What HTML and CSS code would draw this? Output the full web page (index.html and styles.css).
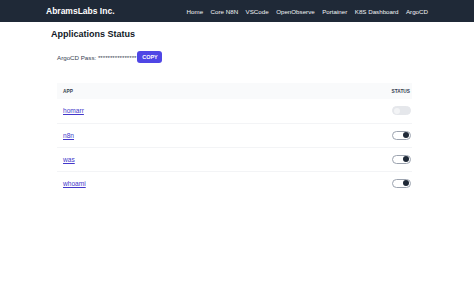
FILE: index.html
```html
<!DOCTYPE html>
<html>
<head>
<meta charset="utf-8">
<link rel="stylesheet" href="styles.css">
</head>
<body>
<nav class="nav">
  <div class="nav-inner">
    <span class="brand">AbramsLabs Inc.</span>
    <div class="links">
      <a>Home</a><a>Core N8N</a><a>VSCode</a><a>OpenObserve</a><a>Portainer</a><a>K8S Dashboard</a><a>ArgoCD</a>
    </div>
  </div>
</nav>
<main class="main">
  <h1 class="title">Applications Status</h1>
  <div class="pass">
    <span>ArgoCD Pass: ****************</span>
    <button class="copy">COPY</button>
  </div>
  <table class="tbl">
    <thead>
      <tr><th class="c-app">APP</th><th class="c-status">STATUS</th></tr>
    </thead>
    <tbody>
      <tr><td><a class="app">homarr</a></td><td class="c-status"><span class="tog off"><span class="knob"></span></span></td></tr>
      <tr><td><a class="app">n8n</a></td><td class="c-status"><span class="tog on"><span class="knob"></span></span></td></tr>
      <tr><td><a class="app">was</a></td><td class="c-status"><span class="tog on"><span class="knob"></span></span></td></tr>
      <tr><td><a class="app">whoami</a></td><td class="c-status"><span class="tog on"><span class="knob"></span></span></td></tr>
    </tbody>
  </table>
</main>
</body>
</html>
```
FILE: styles.css
```css
* { box-sizing: border-box; }
body {
  margin: 0;
  font-family: "Liberation Sans", Arial, sans-serif;
  background: #fff;
  color: #111827;
}
.nav {
  background: #1f2937;
  height: 22px;
}
.nav-inner {
  width: 384px;
  margin: 0 auto;
  height: 22px;
  display: flex;
  align-items: center;
  justify-content: space-between;
  padding-left: 1px;
  padding-right: 1px;
}
.brand {
  color: #fff;
  font-weight: bold;
  font-size: 8.5px;
}
.links {
  display: flex;
  gap: 7.5px;
  font-size: 6.2px;
  color: #f3f4f6;
}
.main {
  width: 384px;
  margin: 0 auto;
  padding: 7px 6px 0;
}
.title {
  font-size: 9px;
  font-weight: bold;
  margin: 0 0 11px;
  line-height: 11px;
}
.pass {
  display: flex;
  align-items: center;
  gap: 1px;
  font-size: 6.2px;
  color: #374151;
  padding-left: 6px;
}
.copy {
  background: #4f46e5;
  color: #fff;
  border: none;
  border-radius: 3px;
  font-family: inherit;
  font-weight: bold;
  font-size: 5.5px;
  height: 12px;
  width: 25px;
  padding: 0;
}
.tbl {
  margin: 20px 0 0 6px;
  width: 355px;
  border-collapse: collapse;
}
.tbl th {
  background: #f9fafb;
  font-size: 4.8px;
  font-weight: bold;
  color: #374151;
  height: 16px;
  padding: 0 6px;
  text-align: left;
}
.tbl th.c-status { text-align: right; padding-right: 2px; }
.tbl td {
  height: 24px;
  padding: 0 6px;
  border-bottom: 1px solid #f3f4f6;
  font-size: 6.6px;
}
.tbl tr:last-child td { border-bottom: none; }
.tbl td.c-status { text-align: right; padding-right: 1px; }
.app {
  color: #4338ca;
  text-decoration: underline;
}
.tog {
  display: inline-flex;
  align-items: center;
  width: 19px;
  height: 9px;
  border-radius: 5px;
  border: 1px solid #9ca3af;
  background: #fff;
  padding: 0 1px;
  vertical-align: middle;
}
.tog .knob {
  width: 6px;
  height: 6px;
  border-radius: 50%;
  background: #1f2937;
}
.tog.on { justify-content: flex-end; }
.tog.off {
  background: #e5e7eb;
  border-color: #e5e7eb;
  justify-content: flex-start;
}
.tog.off .knob { background: #f3f4f6; }
```
